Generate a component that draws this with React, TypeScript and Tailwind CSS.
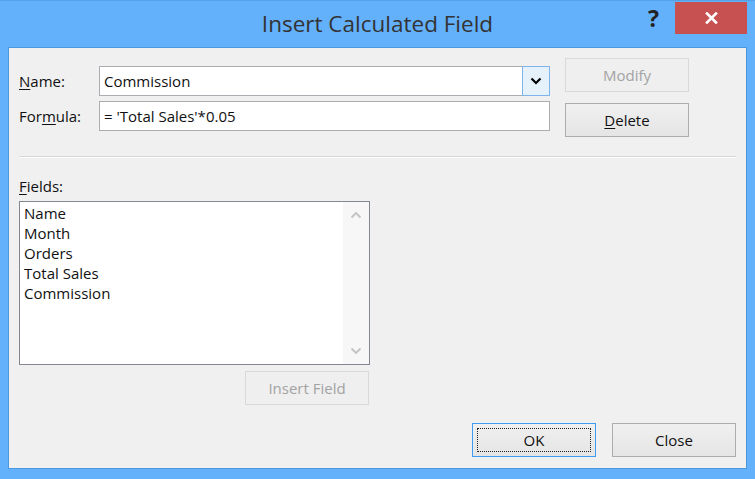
import React from "react";

const font = { fontFamily: '"Open Sans", "Noto Sans", "Liberation Sans", sans-serif' };

function Btn({ children, w = "w-[124px]", disabled = false, focus = false }: { children: React.ReactNode; w?: string; disabled?: boolean; focus?: boolean }) {
  const base = disabled
    ? "border-[#d9d9d9] bg-[#efefef] text-[#a3a3a3]"
    : focus
    ? "border-[#3c9cf0] bg-gradient-to-b from-[#f0f0f0] to-[#e5e5e5] text-[#111]"
    : "border-[#adadad] bg-gradient-to-b from-[#f0f0f0] to-[#e5e5e5] text-[#111]";
  return (
    <div className={`${w} h-[34px] border ${base} flex items-center justify-center text-[15px] relative`}>
      {focus && <div className="absolute inset-[4px] border border-dotted border-[#222]" />}
      <span className="relative">{children}</span>
    </div>
  );
}

export default function App() {
  return (
    <div style={font} className="w-[755px] h-[479px] bg-[#63b1fb] flex flex-col border-t border-[#55a0e6] overflow-hidden">
      <div className="h-[46px] relative flex items-center justify-center">
        <span className="text-[22.5px] text-[#333] mb-[1px]">Insert Calculated Field</span>
        <span className="absolute left-[648px] top-[0px] text-[23px] font-bold text-[#222]">?</span>
        <div className="absolute left-[675px] top-[1px] w-[72px] h-[32px] bg-[#c75050] flex items-center justify-center">
          <svg width="13" height="12" viewBox="0 0 13 12">
            <path d="M2 1.5 L11 10.5 M11 1.5 L2 10.5" stroke="#fff" strokeWidth="2.6" strokeLinecap="square" />
          </svg>
        </div>
      </div>
      <div className="ml-[8px] mr-[8px] h-[422px] border border-[#4d97dc] bg-[#f0f0f0] flex flex-col text-[15px] text-[#111]">
        <div className="flex pt-[10px] pl-[10px] gap-[15px]">
          <div className="flex flex-col mt-[8px] gap-[5px]">
            <div className="flex items-center h-[30px]">
              <span className="w-[80px]"><span className="underline underline-offset-2">N</span>ame:</span>
              <div className="w-[451px] h-[30px] bg-white border border-[#abadb3] flex items-center">
                <span className="flex-1 pl-[4px]">Commission</span>
                <div className="w-[28px] h-[30px] -mr-px -my-px border border-[#7eb4ea] bg-[#e5f1fb] flex items-center justify-center">
                  <svg width="12" height="8" viewBox="0 0 12 8">
                    <path d="M1.5 1.5 L6 6 L10.5 1.5" stroke="#000" strokeWidth="2.2" fill="none" />
                  </svg>
                </div>
              </div>
            </div>
            <div className="flex items-center h-[30px]">
              <span className="w-[80px]">For<span className="underline underline-offset-2">m</span>ula:</span>
              <div className="w-[451px] h-[30px] bg-white border border-[#abadb3] flex items-center">
                <span className="pl-[4px]">= 'Total Sales'*0.05</span>
              </div>
            </div>
          </div>
          <div className="flex flex-col gap-[11px]">
            <Btn disabled>Modify</Btn>
            <Btn><span className="underline underline-offset-2">D</span>elete</Btn>
          </div>
        </div>
        <div className="mt-[19px] mx-[10px] border-t border-[#d8d8d8] border-b border-b-white" />
        <div className="mt-[18px] ml-[10px] h-[20px] leading-[20px]"><span className="underline underline-offset-2">F</span>ields:</div>
        <div className="mt-[5px] ml-[10px] w-[351px] h-[164px] border border-[#828790] bg-white flex">
          <div className="flex-1 pl-[4px] pt-[1px] flex flex-col leading-[20px]">
            <span>Name</span>
            <span>Month</span>
            <span>Orders</span>
            <span>Total Sales</span>
            <span>Commission</span>
          </div>
          <div className="w-[26px] bg-[#f7f7f7] flex flex-col items-center justify-between py-[9px]">
            <svg width="12" height="8" viewBox="0 0 12 8">
              <path d="M1.5 6.5 L6 2 L10.5 6.5" stroke="#c2c2c2" strokeWidth="1.8" fill="none" />
            </svg>
            <svg width="12" height="8" viewBox="0 0 12 8">
              <path d="M1.5 1.5 L6 6 L10.5 1.5" stroke="#c2c2c2" strokeWidth="1.8" fill="none" />
            </svg>
          </div>
        </div>
        <div className="mt-[6px] ml-[236px]">
          <Btn disabled>Insert Field</Btn>
        </div>
        <div className="mt-[18px] flex justify-end gap-[16px] pr-[10px]">
          <Btn focus>OK</Btn>
          <Btn>Close</Btn>
        </div>
      </div>
    </div>
  );
}
